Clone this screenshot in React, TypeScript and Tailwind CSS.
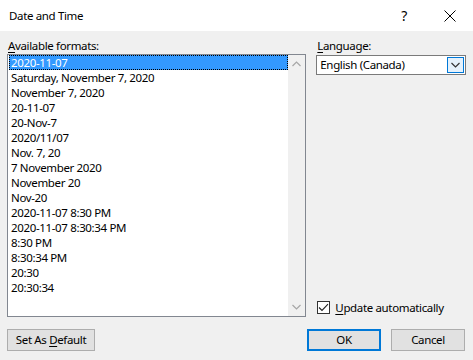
import React from 'react';

const formats = [
  '2020-11-07',
  'Saturday, November 7, 2020',
  'November 7, 2020',
  '20-11-07',
  '20-Nov-7',
  '2020/11/07',
  'Nov. 7, 20',
  '7 November 2020',
  'November 20',
  'Nov-20',
  '2020-11-07 8:30 PM',
  '2020-11-07 8:30:34 PM',
  '8:30 PM',
  '8:30:34 PM',
  '20:30',
  '20:30:34',
];

function Chevron({ up, color = '#a6a6a6' }: { up?: boolean; color?: string }) {
  return (
    <svg width="9" height="6" viewBox="0 0 9 6">
      <path
        d={up ? 'M0.5 5 L4.5 1 L8.5 5' : 'M0.5 1 L4.5 5 L8.5 1'}
        fill="none"
        stroke={color}
        strokeWidth="1.2"
      />
    </svg>
  );
}

export default function App() {
  return (
    <div
      className="w-[473px] h-[360px] flex flex-col bg-[#f0f0f0] text-[11.5px] tracking-[-0.35px] text-black overflow-hidden"
      style={{ fontFamily: '"Noto Sans", "Open Sans", sans-serif' }}
    >
      <div className="h-[31px] bg-white flex items-center pl-[9px]">
        <span className="flex-1">Date and Time</span>
        <span className="w-[46px] text-center text-[14px] leading-none">?</span>
        <div className="w-[46px] flex justify-center">
          <svg width="12" height="12" viewBox="0 0 12 12">
            <path d="M0.5 0.5 L11.5 11.5 M11.5 0.5 L0.5 11.5" stroke="#000" strokeWidth="1" />
          </svg>
        </div>
      </div>

      <div className="flex-1 flex flex-col px-[7px] pt-[6px] pb-[9px]">
        <div className="flex gap-[10px]">
          <div className="w-[300px] flex flex-col">
            <div className="h-[17px] leading-[17px] pl-[1px]">
              <span className="underline underline-offset-2">A</span>vailable formats:
            </div>
            <div className="h-[263px] border border-[#828790] bg-white flex">
              <ul className="flex-1 pl-[1px]">
                {formats.map((f, i) => (
                  <li
                    key={f}
                    className={
                      i === 0
                        ? 'h-[15px] leading-[13px] pl-[1px] bg-[#3399ff] text-white border border-dotted border-black'
                        : 'h-[15px] leading-[15px] pl-[2px]'
                    }
                  >
                    {f}
                  </li>
                ))}
              </ul>
              <div className="w-[17px] bg-[#f0f0f0] flex flex-col justify-between items-center py-[6px]">
                <Chevron up />
                <Chevron />
              </div>
            </div>
          </div>

          <div className="w-[150px] flex flex-col">
            <div className="h-[17px] leading-[17px] pl-[1px]">
              <span className="underline underline-offset-2">L</span>anguage:
            </div>
            <div className="h-[20px] mt-[1px] border border-[#7a7a7a] bg-white flex">
              <span className="flex-1 leading-[18px] pl-[3px]">English (Canada)</span>
              <div className="w-[17px] m-[1px] bg-[#e5f1fb] border border-[#0078d7] flex items-center justify-center">
                <Chevron color="#333" />
              </div>
            </div>
            <div className="flex-1" />
            <label className="flex items-center gap-[5px] mb-[1px] pl-[1px]">
              <span className="w-[13px] h-[13px] border border-[#333] bg-white flex items-center justify-center">
                <svg width="11" height="9" viewBox="0 0 11 9">
                  <path d="M1 4.5 L4 7.5 L10 1.2" fill="none" stroke="#222" strokeWidth="1.1" />
                </svg>
              </span>
              <span>
                <span className="underline underline-offset-2">U</span>pdate automatically
              </span>
            </label>
          </div>
        </div>

        <div className="flex mt-[12px]">
          <button className="w-[88px] h-[22px] bg-[#e1e1e1] border border-[#adadad] leading-none">
            Set As <span className="underline underline-offset-2">D</span>efault
          </button>
          <div className="flex-1" />
          <button className="w-[74px] h-[22px] bg-[#e1e1e1] border-2 border-[#0078d7] leading-none">
            OK
          </button>
          <button className="w-[74px] h-[22px] ml-[10px] mr-[1px] bg-[#e1e1e1] border border-[#adadad] leading-none">
            Cancel
          </button>
        </div>
      </div>
    </div>
  );
}
